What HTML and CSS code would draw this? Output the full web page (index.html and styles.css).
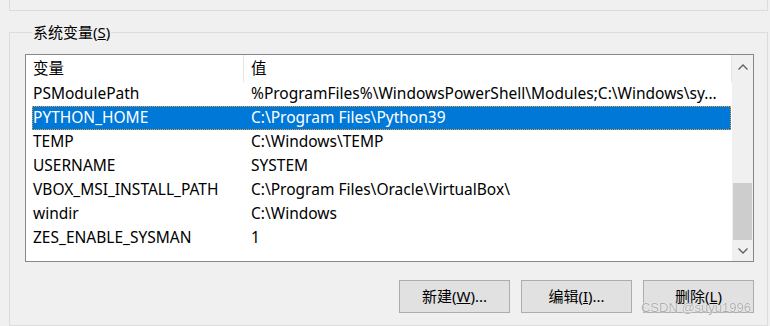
FILE: index.html
```html
<!DOCTYPE html>
<html lang="zh-CN">

<head>
    <meta charset="UTF-8">
    <meta name="viewport" content="width=device-width, initial-scale=1.0">
    <title>环境变量</title>
    <link rel="stylesheet" href="styles.css">
</head>

<body>
    <div class="group-top"></div>

    <fieldset class="group">
        <legend>系统变量(<u>S</u>)</legend>

        <div class="listbox">
            <div class="list">
                <div class="list-head">
                    <div class="col-name">变量</div>
                    <div class="col-value">值</div>
                </div>
                <div class="row">
                    <div class="col-name">PSModulePath</div>
                    <div class="col-value">%ProgramFiles%\WindowsPowerShell\Modules;C:\Windows\sy...</div>
                </div>
                <div class="row selected">
                    <div class="col-name">PYTHON_HOME</div>
                    <div class="col-value">C:\Program Files\Python39</div>
                </div>
                <div class="row">
                    <div class="col-name">TEMP</div>
                    <div class="col-value">C:\Windows\TEMP</div>
                </div>
                <div class="row">
                    <div class="col-name">USERNAME</div>
                    <div class="col-value">SYSTEM</div>
                </div>
                <div class="row">
                    <div class="col-name">VBOX_MSI_INSTALL_PATH</div>
                    <div class="col-value">C:\Program Files\Oracle\VirtualBox\</div>
                </div>
                <div class="row">
                    <div class="col-name">windir</div>
                    <div class="col-value">C:\Windows</div>
                </div>
                <div class="row">
                    <div class="col-name">ZES_ENABLE_SYSMAN</div>
                    <div class="col-value">1</div>
                </div>
            </div>

            <div class="scrollbar">
                <div class="scroll-btn up">
                    <svg width="10" height="6" viewBox="0 0 10 6"><polyline points="0.5,5.5 5,1 9.5,5.5" fill="none" stroke="#606060" stroke-width="1.4"/></svg>
                </div>
                <div class="track">
                    <div class="thumb"></div>
                </div>
                <div class="scroll-btn down">
                    <svg width="10" height="6" viewBox="0 0 10 6"><polyline points="0.5,0.5 5,5 9.5,0.5" fill="none" stroke="#606060" stroke-width="1.4"/></svg>
                </div>
            </div>
        </div>

        <div class="buttons">
            <button class="btn">新建(<u>W</u>)...</button>
            <button class="btn">编辑(<u>I</u>)...</button>
            <button class="btn">删除(<u>L</u>)</button>
        </div>
    </fieldset>

    <div class="watermark">CSDN @suyu1996</div>
</body>

</html>
```

FILE: styles.css
```css
body {
    margin: 0;
    height: 326px;
    overflow: hidden;
    position: relative;
    background: #f0f0f0;
    font-family: "Noto Sans", "Noto Sans CJK SC", sans-serif;
    font-size: 15.5px;
    color: #000;
}

.group-top {
    height: 10px;
    margin: 0 2px 0 9px;
    border: 1px solid #dcdcdc;
    border-top: none;
}

.group {
    margin: 14px 2px 0 9px;
    padding: 14px 13px 12px 15px;
    border: 1px solid #dcdcdc;
    min-width: 0;
}

.group legend {
    margin-left: 7px;
    padding: 0 1px;
    line-height: 15px;
    font-size: 15px;
}

.listbox {
    display: flex;
    height: 206px;
    border: 1px solid #828790;
    background: #fff;
}

.list {
    flex: 1;
}

.list-head {
    display: grid;
    grid-template-columns: 217px 1fr;
    height: 27px;
    line-height: 27px;
    border-right: 1px solid #e5e5e5;
}

.list-head .col-name {
    padding-left: 7px;
}

.list-head .col-value {
    padding-left: 7px;
    border-left: 1px solid #e5e5e5;
}

.row {
    display: grid;
    grid-template-columns: 211px 1fr;
    height: 24px;
    line-height: 23px;
    margin: 0 1px 0 6px;
    white-space: nowrap;
}

.row .col-name {
    padding-left: 1px;
}

.row .col-value {
    padding-left: 8px;
    overflow: hidden;
}

.row.selected {
    background: #0078d7;
    color: #fff;
    outline: 1px dotted #f39b2e;
    outline-offset: -1px;
}

.scrollbar {
    display: flex;
    flex-direction: column;
    width: 21px;
    background: #f0f0f0;
}

.scroll-btn {
    display: flex;
    align-items: center;
    justify-content: center;
}

.scroll-btn.up {
    height: 24px;
}

.scroll-btn.down {
    height: 21px;
}

.track {
    flex: 1;
    display: flex;
    flex-direction: column;
    justify-content: flex-end;
}

.thumb {
    height: 57px;
    margin: 0 1px;
    background: #cdcdcd;
}

.buttons {
    display: flex;
    justify-content: flex-end;
    gap: 11px;
    margin-top: 18px;
}

.btn {
    width: 111px;
    height: 33px;
    background: #e1e1e1;
    border: 1px solid #adadad;
    font-family: "Noto Sans", "Noto Sans CJK SC", sans-serif;
    font-size: 15px;
    color: #000;
    padding: 0 0 2px;
}

.watermark {
    position: absolute;
    right: 19px;
    top: 300px;
    font-family: "Liberation Sans", sans-serif;
    font-size: 13px;
    color: rgba(160, 160, 160, 0.85);
    text-shadow: 0 0 1px #fff, 0 0 1px #fff;
}
```
